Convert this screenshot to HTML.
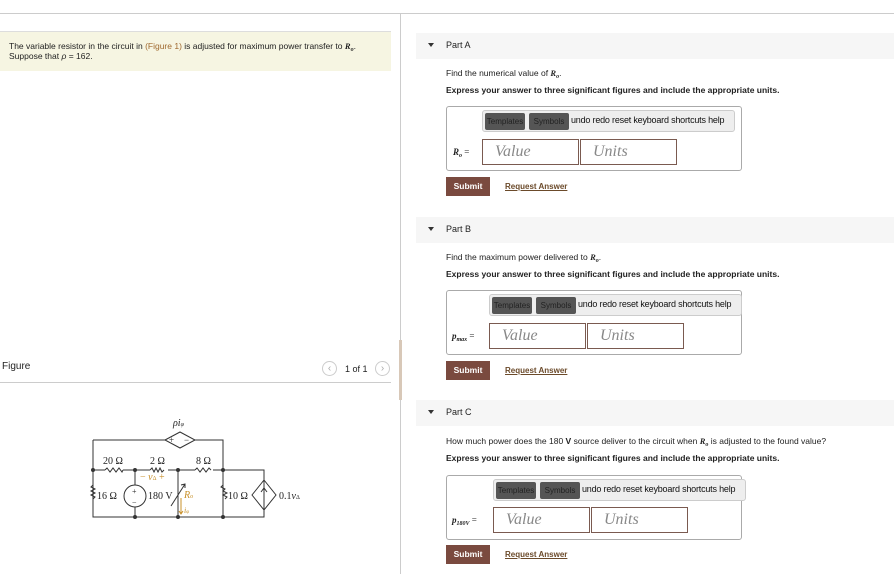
<!DOCTYPE html>
<html><head><meta charset="utf-8"><style>
*{margin:0;padding:0;box-sizing:border-box}
body{width:894px;height:574px;position:relative;background:#fff;font-family:"Liberation Sans",Arial,sans-serif;font-size:8.5px;color:#222;overflow:hidden}
.a{position:absolute}
.s{font-size:6px;vertical-align:-2px;line-height:0}
.hdr{position:absolute;left:416px;width:478px;height:26px;background:#f6f6f6}
.hdr span{position:absolute;left:30px;top:7px;font-size:9px}
.hdr i{position:absolute;left:12px;top:10px;width:0;height:0;border-left:3px solid transparent;border-right:3px solid transparent;border-top:4px solid #333}
.box{position:absolute;left:446px;width:296px;height:65px;border:1px solid #aaa;border-radius:3px;background:#fff}
.tb{position:absolute;height:22px;width:253px;background:#eee;border:1px solid #ccc;border-radius:3px}
.btn{position:absolute;top:2px;height:17px;width:40px;background:#555;border-radius:2px;color:#222;font-size:8px;line-height:17px;text-align:center;overflow:hidden;white-space:nowrap}
.tt{position:absolute;top:4px;font-size:9px;color:#111;white-space:nowrap;letter-spacing:-0.2px}
.inp{position:absolute;height:26px;width:97px;border:1px solid #7a5a50;font-family:"Liberation Serif",serif;font-style:italic;font-size:16px;color:#888;padding:3px 12px}
.sub{position:absolute;left:446px;width:44px;height:19px;background:#7a4a3f;color:#fff;font-size:8.5px;font-weight:bold;text-align:center;line-height:19px}
.req{position:absolute;left:505px;font-size:8px;font-weight:bold;color:#6b4a2a;text-decoration:underline}
.lbl{position:absolute;font-family:"Liberation Serif",serif;font-weight:bold;font-style:italic;font-size:9px}
b.em{font-family:"Liberation Serif",serif;font-style:italic}
</style></head><body>
<div class="a" style="left:0;top:13px;width:894px;height:1px;background:#ccc"></div>
<div class="a" style="left:400px;top:13px;width:1px;height:561px;background:#ccc"></div>
<div class="a" style="left:399px;top:340px;width:3px;height:60px;background:#d8c8b8"></div>
<div class="a" style="left:0;top:31px;width:391px;height:40px;background:#f6f5e2;border-top:1px solid #ddd"></div>
<div class="a" style="left:9px;top:41px;font-size:8.5px;line-height:10px">The variable resistor in the circuit in <span style="color:#a06a30">(Figure 1)</span> is adjusted for maximum power transfer to <b class="em">R<span class="s">o</span></b>.<br>Suppose that <i>ρ</i> = 162.</div>
<div class="a" style="left:2px;top:361px;font-size:10px">Figure</div>
<div class="a" style="left:322px;top:361px;width:15px;height:15px;border:1px solid #ccc;border-radius:50%;color:#aaa;text-align:center;font-size:10px;line-height:13px">‹</div>
<div class="a" style="left:345px;top:364px;font-size:9px">1 of 1</div>
<div class="a" style="left:375px;top:361px;width:15px;height:15px;border:1px solid #ccc;border-radius:50%;color:#aaa;text-align:center;font-size:10px;line-height:13px">›</div>
<div class="a" style="left:0;top:382px;width:391px;height:1px;background:#ccc"></div>

<svg class="a" style="left:80px;top:410px" width="240" height="120" viewBox="0 0 240 120" font-family="Liberation Serif,serif" font-size="10">
<g stroke="#333" fill="none" stroke-width="1">
<path d="M13 30 V107 H184 V60 M13 30 H85 M115 30 H143 V60 M13 60 H25 M43 60 H55 M55 60 H70 M88 60 H98 M98 60 H115 M133 60 H184 V107"/>
<path d="M25 60 l2 -2 l3 4 l3 -4 l3 4 l3 -4 l3 4 l1 -2"/>
<path d="M70 60 l2 -2 l2 4 l2 -4 l2 4 l2 -4 l2 4 l2 -2"/>
<path d="M115 60 l2 -2 l3 4 l3 -4 l3 4 l3 -4 l2 2"/>
<path d="M85 30 l15 -8 l15 8 l-15 8 z"/>
<path d="M13 75 l-2 2 l4 2 l-4 2 l4 2 l-4 2 l4 2 l-2 2 M143 75 l-2 2 l4 2 l-2 2 l4 2 l-4 2 l4 2 l-2 2"/>
<path d="M55 60 V75 M55 97 V107 M98 60 V107 M143 60 V107 M184 60 V70 l-12 15 l12 15 l12 -15 l-12 -15 M184 100 V107"/>
<circle cx="55" cy="86" r="11"/>
<path d="M184 92 V78 M181 82 l3 -4 l3 4"/>
<path d="M91 96 l14 -22 M101 75 l4 -1 l0 4"/>
</g>
<g fill="#333"><circle cx="13" cy="60" r="2"/><circle cx="55" cy="60" r="2"/><circle cx="98" cy="60" r="2"/><circle cx="143" cy="60" r="2"/><circle cx="55" cy="107" r="2"/><circle cx="98" cy="107" r="2"/><circle cx="143" cy="107" r="2"/></g>
<g fill="#222"><text x="93" y="16" font-style="italic">ρi<tspan font-size="6">φ</tspan></text><text x="89" y="33" font-size="9">+</text><text x="104" y="33" font-size="9">−</text>
<text x="23" y="54">20 Ω</text><text x="70" y="54">2 Ω</text><text x="116" y="54">8 Ω</text>
<text x="17" y="89">16 Ω</text><text x="52" y="84" font-size="8">+</text><text x="52" y="95" font-size="8">−</text><text x="68" y="89">180 V</text>
<text x="148" y="89">10 Ω</text><text x="199" y="89">0.1<tspan font-style="italic">v</tspan><tspan font-size="6">Δ</tspan></text></g>
<g fill="#c8902a"><text x="60" y="70">− <tspan font-style="italic">v</tspan><tspan font-size="6">Δ</tspan> +</text><text x="104" y="88" font-style="italic">R<tspan font-size="6">o</tspan></text><text x="104" y="103" font-style="italic" font-size="8">i<tspan font-size="5">φ</tspan></text></g>
<path d="M101 88 V104 M99 101 l2 3 l2 -3" stroke="#c8902a" fill="none"/>
</svg>

<!-- Part A -->
<div class="hdr" style="top:33px"><i></i><span>Part A</span></div>
<div class="a" style="left:446px;top:68px">Find the numerical value of <b class="em">R<span class="s">o</span></b>.</div>
<div class="a" style="left:446px;top:85px;font-weight:bold;font-size:8.5px">Express your answer to three significant figures and include the appropriate units.</div>
<div class="box" style="top:106px"></div>
<div class="tb" style="left:482px;top:110px"><div class="btn" style="left:2px">Templates</div><div class="btn" style="left:46px">Symbols</div><div class="tt" style="left:88px">undo  redo  reset  keyboard shortcuts  help</div></div>
<div class="lbl" style="left:453px;top:147px">R<span class="s">o</span> <span style="font-style:normal;font-weight:normal">=</span></div>
<div class="inp" style="left:482px;top:139px">Value</div><div class="inp" style="left:580px;top:139px">Units</div>
<div class="sub" style="top:177px">Submit</div><div class="req" style="top:182px">Request Answer</div>

<!-- Part B -->
<div class="hdr" style="top:217px"><i></i><span>Part B</span></div>
<div class="a" style="left:446px;top:252px">Find the maximum power delivered to <b class="em">R<span class="s">o</span></b>.</div>
<div class="a" style="left:446px;top:269px;font-weight:bold">Express your answer to three significant figures and include the appropriate units.</div>
<div class="box" style="top:290px"></div>
<div class="tb" style="left:489px;top:294px"><div class="btn" style="left:2px">Templates</div><div class="btn" style="left:46px">Symbols</div><div class="tt" style="left:88px">undo  redo  reset  keyboard shortcuts  help</div></div>
<div class="lbl" style="left:452px;top:331px">p<span class="s">max</span> <span style="font-style:normal;font-weight:normal">=</span></div>
<div class="inp" style="left:489px;top:323px">Value</div><div class="inp" style="left:587px;top:323px">Units</div>
<div class="sub" style="top:361px">Submit</div><div class="req" style="top:366px">Request Answer</div>

<!-- Part C -->
<div class="hdr" style="top:400px"><i></i><span>Part C</span></div>
<div class="a" style="left:446px;top:436px">How much power does the 180 <b>V</b> source deliver to the circuit when <b class="em">R<span class="s">o</span></b> is adjusted to the found value?</div>
<div class="a" style="left:446px;top:453px;font-weight:bold">Express your answer to three significant figures and include the appropriate units.</div>
<div class="box" style="top:475px"></div>
<div class="tb" style="left:493px;top:479px"><div class="btn" style="left:2px">Templates</div><div class="btn" style="left:46px">Symbols</div><div class="tt" style="left:88px">undo  redo  reset  keyboard shortcuts  help</div></div>
<div class="lbl" style="left:452px;top:515px">p<span class="s">180V</span> <span style="font-style:normal;font-weight:normal">=</span></div>
<div class="inp" style="left:493px;top:507px">Value</div><div class="inp" style="left:591px;top:507px">Units</div>
<div class="sub" style="top:545px">Submit</div><div class="req" style="top:550px">Request Answer</div>
</body></html>
